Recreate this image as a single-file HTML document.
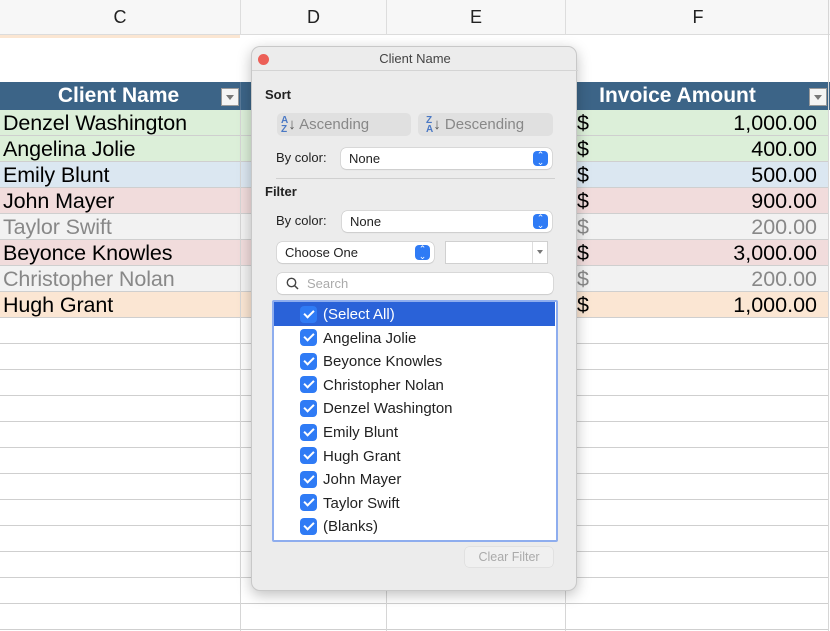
<!DOCTYPE html>
<html><head><style>
*{margin:0;padding:0;box-sizing:border-box}
body{width:830px;height:631px;overflow:hidden;background:#fff;font-family:"Liberation Sans",Arial,sans-serif;position:relative}
.abs{position:absolute}
.colhdr{top:0;height:35px;background:#f7f7f7;border-bottom:1px solid #dcdcdc;font-size:18px;color:#222;display:flex;align-items:center;justify-content:center}
.vl{position:absolute;width:1px;background:#d6d6d6}
.row{position:absolute;left:0;width:829px;height:26px;border-bottom:1px solid #cfcfcf;font-size:21.5px;line-height:27px}
.name{position:absolute;left:3px;letter-spacing:-0.1px}
.dol{position:absolute;left:577px}
.amt{position:absolute;right:12px}
.hdr{position:absolute;top:82px;height:28px;background:#3c6487;color:#fff;font-weight:bold;font-size:21px;line-height:28px}
.dd{position:absolute;top:6px;width:18px;height:18px;background:#f4f4f4;border:1px solid #999}
.dd:after{content:"";position:absolute;left:4px;top:6px;border-left:4px solid transparent;border-right:4px solid transparent;border-top:5px solid #777}
.dlg{left:251px;top:46px;width:326px;height:545px;background:#ececec;border:1px solid #c8c8c8;border-radius:9px;box-shadow:0 4px 14px rgba(0,0,0,.25);font-size:13px;color:#222}
.sel{position:absolute;height:21px;background:#fff;border-radius:5px;box-shadow:0 0 0 .5px #c4c4c4,0 1px 1px rgba(0,0,0,.1);line-height:21px;padding-left:8px;font-size:13px}
.sel .ar{position:absolute;right:4px;top:3px;width:15px;height:15px;border-radius:4px;background:#2f7bf5;color:#fff;font-size:9px;line-height:7px;text-align:center;padding-top:1px}
.btn{position:absolute;height:23px;background:#e0e0e0;border-radius:5px;color:#888;font-size:15px;line-height:23px}
.li{position:absolute;left:0;width:281px;height:23.6px;font-size:15px;line-height:25px}
.cb{position:absolute;left:26px;top:3.5px;width:17px;height:17px;border-radius:4px;background:#2f7bf5}
.cb:after{content:"";position:absolute;left:5.5px;top:2px;width:4px;height:8px;border:solid #fff;border-width:0 2px 2px 0;transform:rotate(45deg)}
.li span{position:absolute;left:49px}
</style></head><body>
<div class="abs colhdr" style="left:0;width:240px">C</div>
<div class="abs colhdr" style="left:240px;width:146px;border-left:1px solid #ddd">D</div>
<div class="abs colhdr" style="left:386px;width:179px;border-left:1px solid #ddd">E</div>
<div class="abs colhdr" style="left:565px;width:265px;border-left:1px solid #ddd">F</div>
<div class="abs" style="left:0;top:35px;width:240px;height:3px;background:#fbe6d2"></div>

<div class="hdr" style="left:0;width:240px;text-align:center;padding-right:3px">Client Name<div class="dd" style="left:221px"></div></div>
<div class="hdr" style="left:240px;width:588px;border-left:1px solid #5a7a98"></div>
<div class="hdr" style="left:565px;width:265px;text-align:center;padding-right:40px">Invoice Amount<div class="dd" style="left:244px"></div></div>

<div class="row" style="top:110px;background:#dcefd9"><span class="name">Denzel Washington</span><span class="dol">$</span><span class="amt">1,000.00</span></div>
<div class="row" style="top:136px;background:#dcefd9"><span class="name">Angelina Jolie</span><span class="dol">$</span><span class="amt">400.00</span></div>
<div class="row" style="top:162px;background:#dbe7f1"><span class="name">Emily Blunt</span><span class="dol">$</span><span class="amt">500.00</span></div>
<div class="row" style="top:188px;background:#f1dcdc"><span class="name">John Mayer</span><span class="dol">$</span><span class="amt">900.00</span></div>
<div class="row" style="top:214px;background:#f2f2f2;color:#888"><span class="name">Taylor Swift</span><span class="dol">$</span><span class="amt">200.00</span></div>
<div class="row" style="top:240px;background:#f1dcdc"><span class="name">Beyonce Knowles</span><span class="dol">$</span><span class="amt">3,000.00</span></div>
<div class="row" style="top:266px;background:#f2f2f2;color:#888"><span class="name">Christopher Nolan</span><span class="dol">$</span><span class="amt">200.00</span></div>
<div class="row" style="top:292px;background:#fbe6d3"><span class="name">Hugh Grant</span><span class="dol">$</span><span class="amt">1,000.00</span></div>
<div class="row" style="top:318px"></div><div class="row" style="top:344px"></div><div class="row" style="top:370px"></div><div class="row" style="top:396px"></div><div class="row" style="top:422px"></div><div class="row" style="top:448px"></div><div class="row" style="top:474px"></div><div class="row" style="top:500px"></div><div class="row" style="top:526px"></div><div class="row" style="top:552px"></div><div class="row" style="top:578px"></div><div class="row" style="top:604px"></div>
<div class="vl" style="left:240px;top:110px;height:521px"></div>
<div class="vl" style="left:386px;top:110px;height:521px"></div>
<div class="vl" style="left:565px;top:110px;height:521px"></div>
<div class="vl" style="left:828px;top:0;height:631px"></div>

<div class="abs dlg">
 <div class="abs" style="left:6px;top:7px;width:11px;height:11px;border-radius:50%;background:#ec5f57"></div>
 <div class="abs" style="left:0;top:4px;width:326px;text-align:center;color:#444;font-size:13px">Client Name</div>
 <div class="abs" style="left:0;top:23px;width:326px;height:1px;background:#d4d4d4"></div>
 <div class="abs" style="left:13px;top:40px;font-weight:bold">Sort</div>
 <div class="btn" style="left:25px;top:66px;width:134px;padding-left:4px"><span style="color:#4a78c4;font-size:10px;font-weight:bold;display:inline-block;line-height:9px;vertical-align:middle">A<br>Z</span><span style="color:#555">↓</span> Ascending</div>
 <div class="btn" style="left:166px;top:66px;width:135px;padding-left:8px"><span style="color:#4a78c4;font-size:10px;font-weight:bold;display:inline-block;line-height:9px;vertical-align:middle">Z<br>A</span><span style="color:#555">↓</span> Descending</div>
 <div class="abs" style="left:24px;top:103px">By color:</div>
 <div class="sel" style="left:89px;top:101px;width:211px">None<div class="ar">⌃<br>⌄</div></div>
 <div class="abs" style="left:24px;top:131px;width:279px;height:1px;background:#d0d0d0"></div>
 <div class="abs" style="left:13px;top:137px;font-weight:bold">Filter</div>
 <div class="abs" style="left:24px;top:166px">By color:</div>
 <div class="sel" style="left:90px;top:164px;width:210px">None<div class="ar">⌃<br>⌄</div></div>
 <div class="sel" style="left:25px;top:195px;width:157px">Choose One<div class="ar">⌃<br>⌄</div></div>
 <div class="abs" style="left:193px;top:194px;width:103px;height:23px;background:#fff;border:1px solid #d0d0d0"><div class="abs" style="right:14px;top:0;width:1px;height:21px;background:#ddd"></div><div class="abs" style="right:4px;top:8px;border-left:3px solid transparent;border-right:3px solid transparent;border-top:4px solid #777"></div></div>
 <div class="sel" style="left:25px;top:226px;width:276px;color:#aaa;padding-left:30px">Search<svg class="abs" style="left:9px;top:4px" width="13" height="13" viewBox="0 0 13 13"><circle cx="5.5" cy="5.5" r="4.2" fill="none" stroke="#444" stroke-width="1.4"/><path d="M8.6 8.6L12 12" stroke="#444" stroke-width="1.5"/></svg></div>
 <div class="abs" style="left:20px;top:253px;width:286px;height:242px;background:#fff;border:2px solid #8eadee;border-radius:2px;overflow:hidden">
  <div class="li" style="top:0;background:#2a62d8;color:#fff"><div class="cb"></div><span>(Select All)</span></div>
  <div class="li" style="top:23.6px"><div class="cb"></div><span>Angelina Jolie</span></div>
  <div class="li" style="top:47.2px"><div class="cb"></div><span>Beyonce Knowles</span></div>
  <div class="li" style="top:70.8px"><div class="cb"></div><span>Christopher Nolan</span></div>
  <div class="li" style="top:94.4px"><div class="cb"></div><span>Denzel Washington</span></div>
  <div class="li" style="top:118px"><div class="cb"></div><span>Emily Blunt</span></div>
  <div class="li" style="top:141.6px"><div class="cb"></div><span>Hugh Grant</span></div>
  <div class="li" style="top:165.2px"><div class="cb"></div><span>John Mayer</span></div>
  <div class="li" style="top:188.8px"><div class="cb"></div><span>Taylor Swift</span></div>
  <div class="li" style="top:212.4px"><div class="cb"></div><span>(Blanks)</span></div>
 </div>
 <div class="abs" style="left:213px;top:500px;width:88px;height:20px;background:#f0f0f0;border-radius:4px;box-shadow:0 0 0 .5px #d6d6d6;color:#aaa;text-align:center;line-height:20px;font-size:12.5px">Clear Filter</div>
</div>
</body></html>
